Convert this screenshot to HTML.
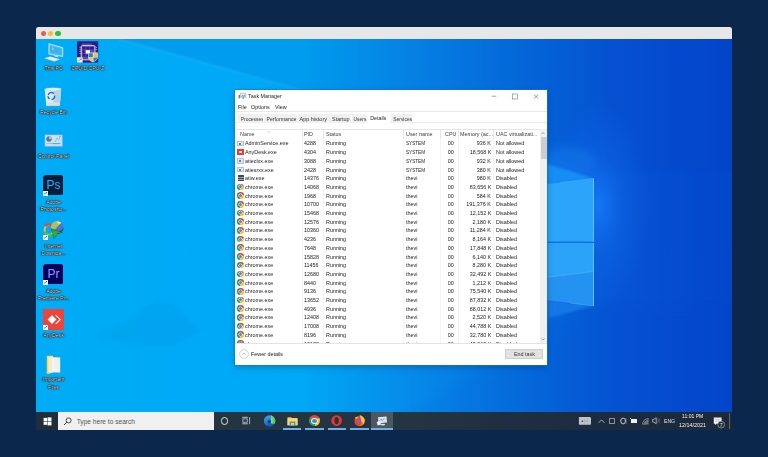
<!DOCTYPE html>
<html><head><meta charset="utf-8">
<style>
*{margin:0;padding:0;box-sizing:border-box}
html,body{width:768px;height:457px;overflow:hidden;background:#0b274c;font-family:"Liberation Sans",sans-serif;position:relative}
.a{position:absolute}
#win{position:absolute;left:36px;top:27px;width:696px;height:402.5px;border-radius:2.5px 2.5px 1.5px 1.5px;overflow:hidden}
#tbar{position:absolute;left:0;top:0;width:696px;height:11.6px;background:#e7e7e7}
.dot{position:absolute;top:3.6px;width:5.4px;height:5.4px;border-radius:50%}
#desk{position:absolute;left:0;top:11.5px;width:696px;height:373.5px;overflow:hidden;
 background:linear-gradient(90deg,#00aaf5 0%,#00a8f4 25%,#0890ec 42%,#0a6fe2 62%,#0655d6 82%,#0444c8 100%)}
#taskbar{position:absolute;left:0;top:385px;width:696px;height:17.5px;background:linear-gradient(90deg,#233540 0%,#223541 55%,#1f2e40 68%,#1c2b3d 82%,#1b293b 100%)}
.lbl{position:absolute;color:#ececec;font-size:5.1px;line-height:7.2px;text-align:center;text-shadow:0 0 0.5px #000,0 0 0.8px #000,0 0 1.1px #000,0 0.4px 1.2px #000,0 0 1.6px rgba(0,0,0,.6);white-space:nowrap}
/* task manager */
#tm{position:absolute;left:235px;top:89.5px;width:312px;height:275.5px;background:#fff;box-shadow:0 0 0 0.6px #1a7ad0,0 2px 6px rgba(0,0,0,.25);font-size:6.1px;color:#1a1a1a;overflow:hidden}
#tm .t{position:absolute;white-space:nowrap;line-height:6px;transform:scaleX(.885);transform-origin:0 50%}
.tabs{position:absolute;left:0;top:21.8px;width:312px;height:11.4px;border-top:0.5px solid #e8e8e8;border-bottom:0.5px solid #ececec;background:#fff}
.tab{position:absolute;top:1.4px;height:8.9px;background:#f0f0f0;color:#333;overflow:hidden;font-size:6.1px;line-height:10.6px;text-align:center;white-space:nowrap}
.tab.sel{background:#fff;line-height:8.4px;color:#222}
.hdr{position:absolute;left:0;top:39.8px;width:305px;height:9.45px;border-top:0.5px solid #e5e5e5}
.hdr span{position:absolute;top:0.1px;color:#3c3c3c;white-space:nowrap;transform:scaleX(.885);transform-origin:0 50%}
.sep{position:absolute;top:0;width:0.5px;height:214px;background:#efefef}
.r{position:absolute;left:0;width:305px;height:8.7px;line-height:8.7px;white-space:nowrap;color:#1c1c1c}
.r span{position:absolute;top:0;transform:scaleX(.885);transform-origin:0 50%}
.r span.c4,.r span.c5{transform-origin:100% 50%}
.c0{left:10.2px}.c1{left:68.6px}.c2{left:90.8px}.c3{left:170.7px}
.r span.up{transform:scaleX(0.76)}
.c4{right:86.6px}.c5{right:49px}.c6{left:261px}
.ic{position:absolute;left:2.4px;top:0.7px;width:6.6px;height:6.6px;display:block}
.ic.chr{border-radius:50%;background:conic-gradient(from -45deg,#db4437 0 125deg,#f4c20d 125deg 240deg,#0f9d58 240deg 360deg)}
.ic.chr::after{content:"";position:absolute;left:1.8px;top:1.8px;width:3px;height:3px;border-radius:50%;background:#4285f4;box-shadow:0 0 0 0.6px #fff}
.ic.svc{background:#dfe6ee;border:0.4px solid #b5c2d0;width:7.2px;height:5.6px;top:1.2px;left:2.1px}
.ic.svc::after{content:"";position:absolute;left:1.1px;top:1.2px;width:1.8px;height:1.8px;border-radius:50%;background:#1a6fe0}
.ic.any{background:#ee3b33;left:2.2px;top:0.6px;width:7px;height:6.6px}
.ic.any::after{content:"";position:absolute;left:1.4px;top:2px;width:3.2px;height:2.4px;background:#fff;clip-path:polygon(0 50%,40% 0,100% 0,100% 100%,40% 100%)}
.ic.calc{background:#3e4854;border-radius:0.6px;width:6.2px;height:6.6px;left:2.5px;background-image:linear-gradient(#3e4854 0 1.6px,transparent 1.6px),repeating-linear-gradient(90deg,transparent 0 1.8px,#9aa4ae 1.8px 2.2px),repeating-linear-gradient(0deg,transparent 0 1.5px,#9aa4ae 1.5px 1.9px)}
</style></head><body>
<div id="win">
 <div id="tbar">
  <div class="dot" style="left:4.9px;background:#ee5b52"></div>
  <div class="dot" style="left:12px;background:#f5bd3a"></div>
  <div class="dot" style="left:19.3px;background:#27c23f"></div>
 </div>
 <div id="desk"><svg class="a" style="left:0;top:0" width="696" height="373.5" viewBox="36 38.5 696 373.5">
 <defs>
  <linearGradient id="wb" x1="36" y1="0" x2="732" y2="0" gradientUnits="userSpaceOnUse"><stop offset="0" stop-color="#00acf6"/><stop offset="0.38" stop-color="#00a8f5"/><stop offset="0.45" stop-color="#039bf0"/><stop offset="0.55" stop-color="#0688e8"/><stop offset="0.7" stop-color="#056cdd"/><stop offset="0.82" stop-color="#0656d4"/><stop offset="0.92" stop-color="#054cd0"/><stop offset="1" stop-color="#0446ca"/></linearGradient>
  <radialGradient id="glow" cx="598" cy="205" r="70" gradientTransform="translate(598 205) scale(0.75 1.5) translate(-598 -205)" gradientUnits="userSpaceOnUse">
   <stop offset="0" stop-color="#1a80ff" stop-opacity="0.75"/><stop offset="0.5" stop-color="#1470f0" stop-opacity="0.3"/><stop offset="1" stop-color="#1470f0" stop-opacity="0"/>
  </radialGradient>
  <filter id="bl" x="-20%" y="-20%" width="140%" height="140%"><feGaussianBlur stdDeviation="4"/></filter>
  <filter id="bl1" x="-5%" y="-5%" width="110%" height="110%"><feGaussianBlur stdDeviation="0.8"/></filter>
 </defs>
 <rect x="36" y="38.5" width="696" height="373.5" fill="url(#wb)"/>
 <path d="M118 38.5 L593.5 171 L800 171 L800 0 L118 0Z" fill="#0038b8" opacity="0.10" filter="url(#bl1)"/>
 <linearGradient id="lf" x1="118" y1="0" x2="593" y2="0" gradientUnits="userSpaceOnUse"><stop offset="0" stop-color="#a8e4ff" stop-opacity="0.3"/><stop offset="0.6" stop-color="#a8e4ff" stop-opacity="0.15"/><stop offset="1" stop-color="#a8e4ff" stop-opacity="0"/></linearGradient>
 <line x1="118" y1="38.5" x2="593.5" y2="171" stroke="url(#lf)" stroke-width="0.9" filter="url(#bl1)"/>
 <path d="M593.5 305.4 L380 430 L800 430 L800 305.4Z" fill="#0038b8" opacity="0.05" filter="url(#bl)"/>
 <rect x="36" y="38.5" width="696" height="373.5" fill="url(#glow)"/>
 <path d="M92 335 L122 324 L145 306 L159 299.5 L175 304 L188 321 L200 330 L175 345 L130 345Z" fill="#0050a0" opacity="0.055" filter="url(#bl1)"/>
 <ellipse cx="565" cy="162" rx="30" ry="16" fill="#1a86f5" opacity="0.35" filter="url(#bl)"/>
 <path d="M547 163.5 L593.5 177.7 L547 184Z" fill="#1890f6" opacity="0.95" filter="url(#bl1)"/>
 <path d="M547 299 L593.5 305.4 L547 318Z" fill="#1a80ee" opacity="0.7" filter="url(#bl1)"/>
 <!-- panes -->
 <path d="M540 184.2 L593.5 177.7 L593.5 241.2 L540 241.2Z" fill="#2aa5fa"/>
 <path d="M540 242.6 L593.5 242.6 L593.5 271 L540 277.6Z" fill="#2aa3f8"/>
 <path d="M540 277.6 L593.5 271 L593.5 305.4 L540 298.8Z" fill="#2492f0"/>
 <line x1="540" y1="277.6" x2="593.5" y2="271" stroke="#56c4ff" stroke-width="0.7" opacity="0.8"/>
 <line x1="593.5" y1="177.7" x2="593.5" y2="241.2" stroke="#70d6ff" stroke-width="0.8"/>
 <line x1="593.5" y1="242.6" x2="593.5" y2="305.4" stroke="#70d6ff" stroke-width="0.8"/>
 <line x1="570" y1="302.6" x2="593.5" y2="305.4" stroke="#5ccaff" stroke-width="0.6" opacity="0.7"/>
 <line x1="560" y1="181.8" x2="593.5" y2="177.7" stroke="#5ccaff" stroke-width="0.5" opacity="0.5"/>
 <line x1="540" y1="241.9" x2="593.5" y2="241.9" stroke="#1470e0" stroke-width="1.2"/>
</svg></div>
 <div id="taskbar"></div>
</div>


<!-- desktop icons -->
<svg class="a" style="left:43px;top:42.5px" width="21" height="20" viewBox="0 0 21 20">
 <path d="M5.8 0.6 L19.8 4.6 L19.8 13.6 L5.8 11.2Z" fill="#7fd0f6" stroke="#d8f2ff" stroke-width="0.6"/>
 <path d="M6.8 2 L18.8 5.4 L18.8 12.4 L6.8 10.3Z" fill="#3fb2ee"/>
 <path d="M9 4.6 L10.6 5.8 L9 7" stroke="#e6f7ff" stroke-width="0.5" fill="none"/>
 <path d="M11 12.2 L14.5 12.8 L15.5 14.2 L12 13.8Z" fill="#d8dde2"/>
 <path d="M1.2 15.2 L7 13.6 L17 16.2 L11.4 18.6Z" fill="#ece6dc"/>
</svg>
<div class="lbl" style="left:53.5px;top:64.5px;transform:translateX(-50%)">This PC</div>
<svg class="a" style="left:76px;top:40px" width="24" height="24" viewBox="76 40 24 24">
 <rect x="77" y="41.3" width="21.2" height="21.3" fill="#2c1a88"/>
 <g fill="#d8d4ec"><rect x="82.6" y="43.6" width="0.8" height="1"/><rect x="84.6" y="43.6" width="0.8" height="1"/><rect x="86.6" y="43.6" width="0.8" height="1"/><rect x="88.6" y="43.6" width="0.8" height="1"/><rect x="90.6" y="43.6" width="0.8" height="1"/><rect x="79.6" y="47" width="1" height="0.8"/><rect x="79.6" y="49" width="1" height="0.8"/><rect x="79.6" y="51" width="1" height="0.8"/><rect x="79.6" y="53" width="1" height="0.8"/><rect x="95.8" y="47" width="1" height="0.8"/><rect x="95.8" y="49" width="1" height="0.8"/></g>
 <rect x="81.2" y="45.6" width="13.8" height="14.2" rx="1" fill="#5a4aa8" stroke="#e4e0f2" stroke-width="0.9"/>
 <g fill="#2c1a88"><rect x="82.6" y="47" width="2.8" height="2.4"/><rect x="86.4" y="47" width="2.8" height="2.4"/><rect x="90.2" y="47" width="3.4" height="2.4"/><rect x="82.6" y="50.4" width="2.2" height="2.6"/><rect x="82.6" y="54" width="2.8" height="2.6"/><rect x="86.4" y="54.4" width="2.8" height="2.4"/></g>
 <rect x="85.7" y="50.2" width="4.3" height="3.4" fill="#fafaff"/>
 <path d="M88.1 52.8 L97.8 52.6 L97.8 57 Q97.8 60.6 93 62.2 Q88.1 60.6 88.1 57Z" fill="#f0f0f8"/>
 <path d="M88.6 53.2 H92.8 V57.2 H88.6Z M93.4 57.6 H97.3 Q97 60.4 93.4 61.6Z" fill="#2f7ad8"/>
 <path d="M93.4 53.2 H97.3 V57 H93.4Z M88.6 57.6 H92.8 V61.6 Q89 60.4 88.6 57.6Z" fill="#f4c430"/>
 <rect x="77" y="57.3" width="5.6" height="5.3" fill="#f4f4f4"/>
 <path d="M78.2 61.8 Q78.4 59.4 80.8 59 L80.4 58.3 L81.8 58.7 L81.3 60.1 L81 59.5 Q79.3 59.8 78.2 61.8Z" fill="#2456b8"/>
</svg>
<div class="lbl" style="left:87.7px;top:64.5px;transform:translateX(-50%)">CPUID CPU-Z</div>
<svg class="a" style="left:44px;top:87px" width="18" height="19.5" viewBox="0 0 18 19.5">
 <path d="M0.6 2.2 L17.2 1.6 L15.8 18.6 L2.4 18.8Z" fill="#d8eefb"/>
 <path d="M9.6 2 L17.2 1.6 L15.8 18.6 L9.4 18.7Z" fill="#b4d2e8"/>
 <ellipse cx="8.9" cy="2.2" rx="8.2" ry="1.5" fill="#e8f6ff" stroke="#a6c8e0" stroke-width="0.4"/>
 <path d="M2.1 15.6 L16 15.4 L15.8 18.6 L2.4 18.8Z" fill="#eadbd0"/>
 <path d="M4.2 8 A3.4 3.4 0 0 1 9.8 6.4" stroke="#1f6ad0" stroke-width="1.4" fill="none"/>
 <path d="M10.6 8.6 A3.4 3.4 0 0 1 7.6 12.6" stroke="#1f6ad0" stroke-width="1.4" fill="none"/>
 <path d="M5.6 12 A3.4 3.4 0 0 1 4 9.2" stroke="#1f6ad0" stroke-width="1.4" fill="none"/>
</svg>
<div class="lbl" style="left:53.5px;top:109.3px;transform:translateX(-50%)">Recycle Bin</div>
<svg class="a" style="left:43.8px;top:134.4px" width="19.2" height="13.2" viewBox="0 0 19.2 13.2">
 <rect x="0.3" y="0.3" width="18.6" height="12.6" fill="#9fd3f4" stroke="#3a8ed8" stroke-width="0.6"/>
 <rect x="1.4" y="1.4" width="16.4" height="10.4" fill="#c4e5f9"/>
 <circle cx="5" cy="5" r="2.8" fill="#2e86d8"/>
 <path d="M5 2.2 A2.8 2.8 0 0 1 7.8 5 L5 5Z" fill="#f5b820"/>
 <rect x="2.4" y="9.3" width="6" height="0.8" fill="#f0a020"/>
 <rect x="8.4" y="9.3" width="8" height="0.8" fill="#3a8ed8"/>
 <path d="M11 8 L13 4 L15 6 L16 2.4" stroke="#5aa8e4" stroke-width="0.6" fill="none"/>
 <circle cx="16" cy="2.4" r="0.7" fill="#f09020"/>
</svg>
<div class="lbl" style="left:53.5px;top:153.3px;transform:translateX(-50%)">Control Panel</div>
<svg class="a" style="left:42.9px;top:174.9px" width="20.5" height="20.5" viewBox="0 0 20.5 20.5">
 <rect width="20.5" height="20.5" rx="3.6" fill="#001e36"/>
 <text x="10.4" y="14" font-family="Liberation Sans" font-size="12" fill="#31a8ff" text-anchor="middle">Ps</text>
</svg>
<svg class="a" style="left:42.8px;top:190.5px" width="5" height="5" viewBox="0 0 5 5"><rect x="0" y="0" width="5" height="5" fill="#f4f4f4"/><path d="M1 4.2 Q1.2 2 3.4 1.6 L3 1 L4.3 1.3 L3.8 2.6 L3.5 2.1 Q2 2.4 1 4.2Z" fill="#2456b8"/></svg>
<div class="lbl" style="left:53.5px;top:198.5px;transform:translateX(-50%)">Adobe<br>Photosho...</div>
<svg class="a" style="left:40px;top:217px" width="26" height="26" viewBox="40 217 26 26">
 <defs><clipPath id="gl"><circle cx="57.1" cy="227.5" r="6.5"/></clipPath></defs>
 <ellipse cx="49" cy="230" rx="4.4" ry="5" fill="none" stroke="#d9c040" stroke-width="2.2"/>
 <path d="M45.2 226.2 A4.4 5 0 0 1 51.5 225.6" stroke="#e0463a" stroke-width="2.2" fill="none"/>
 <path d="M44.6 231.5 A4.4 5 0 0 0 52 234.4" stroke="#50b848" stroke-width="2.2" fill="none"/>
 <circle cx="57.1" cy="227.5" r="6.5" fill="#4a78c8"/>
 <g clip-path="url(#gl)">
  <path d="M50 226 Q52 220 57 220 Q60 221 59.5 224.5 Q57 227 55 229.5 Q51 229 50 226Z" fill="#a9c060"/>
  <path d="M56.5 221.5 Q59 220.5 61.5 222.5 Q60.5 224.5 58.5 224.5Z" fill="#eed880"/>
  <path d="M55 232 Q61 232 64 227 L64 235 L55 235Z" fill="#27508f"/>
 </g>
 <path d="M51.6 229.4 L62.6 232.2 L57.6 233.4 L54 238.6Z" fill="#33b02e" stroke="#1d3a20" stroke-width="0.35"/>
</svg>
<svg class="a" style="left:42.8px;top:235.2px" width="5" height="5" viewBox="0 0 5 5"><rect x="0" y="0" width="5" height="5" fill="#f4f4f4"/><path d="M1 4.2 Q1.2 2 3.4 1.6 L3 1 L4.3 1.3 L3.8 2.6 L3.5 2.1 Q2 2.4 1 4.2Z" fill="#2456b8"/></svg>
<div class="lbl" style="left:53.5px;top:243.1px;transform:translateX(-50%)">Internet<br>Downloa...</div>
<svg class="a" style="left:42.9px;top:264px" width="20.5" height="20.3" viewBox="0 0 20.5 20.3">
 <rect width="20.5" height="20.3" rx="3.6" fill="#00005b"/>
 <text x="10.4" y="13.8" font-family="Liberation Sans" font-size="12" fill="#9999ff" text-anchor="middle">Pr</text>
</svg>
<svg class="a" style="left:42.8px;top:279.6px" width="5" height="5" viewBox="0 0 5 5"><rect x="0" y="0" width="5" height="5" fill="#f4f4f4"/><path d="M1 4.2 Q1.2 2 3.4 1.6 L3 1 L4.3 1.3 L3.8 2.6 L3.5 2.1 Q2 2.4 1 4.2Z" fill="#2456b8"/></svg>
<div class="lbl" style="left:53.5px;top:287.7px;transform:translateX(-50%)">Adobe<br>Premiere Pr...</div>
<svg class="a" style="left:42.6px;top:308.8px" width="21.3" height="21.2" viewBox="0 0 21.3 21.2">
 <rect width="21.3" height="21.2" fill="#ef443b"/>
 <path d="M4.6 10.6 L9 6.2 L13.4 10.6 L9 15Z" fill="#fff"/>
 <path d="M12 6.2 L13.6 6.2 L18 10.6 L13.6 15 L12 15 L16.4 10.6Z" fill="#fff"/>
</svg>
<svg class="a" style="left:42.8px;top:325.2px" width="5" height="5" viewBox="0 0 5 5"><rect x="0" y="0" width="5" height="5" fill="#f4f4f4"/><path d="M1 4.2 Q1.2 2 3.4 1.6 L3 1 L4.3 1.3 L3.8 2.6 L3.5 2.1 Q2 2.4 1 4.2Z" fill="#2456b8"/></svg>
<div class="lbl" style="left:53.5px;top:331.9px;transform:translateX(-50%)">AnyDesk</div>
<svg class="a" style="left:45.5px;top:354.5px" width="15" height="19.5" viewBox="0 0 15 19.5">
 <path d="M0.8 0.8 L7 0.8 L7 17.6 L1.8 19 L0.8 18.4Z" fill="#f6d46e"/>
 <path d="M2.6 2 L14.2 2.6 L14.2 17.6 L2.6 17.2Z" fill="#f4f4f4"/>
 <path d="M2.6 2 L6 2.2 L6 17.4 L2.6 17.2Z" fill="#fde8a8" opacity="0.7"/>
 <g stroke="#d8d8d8" stroke-width="0.4"><path d="M8 5H12.6M8 7H12.6M8 9H12.6M8 11H12.6M8 13H12.6"/></g>
</svg>
<div class="lbl" style="left:53.5px;top:376.3px;transform:translateX(-50%)">Important<br>Files</div>

<!-- taskbar contents (page coords) -->
<div class="a" style="left:36px;top:412px;width:22px;height:17.5px;background:#1f2e38"></div>
<svg class="a" style="left:42.5px;top:416.5px" width="9" height="9" viewBox="0 0 9 9"><g fill="#fff"><rect x="0.6" y="0.9" width="3.4" height="3.2"/><rect x="4.5" y="0.4" width="4" height="3.7"/><rect x="0.6" y="4.6" width="3.4" height="3.2"/><rect x="4.5" y="4.6" width="4" height="3.8"/></g></svg>
<div class="a" style="left:58px;top:412px;width:156px;height:17.5px;background:#f0f0f0"></div>
<svg class="a" style="left:62.5px;top:416.5px" width="9" height="9" viewBox="0 0 9 9"><circle cx="5.6" cy="3.4" r="2.5" fill="none" stroke="#222" stroke-width="0.8"/><line x1="3.8" y1="5.2" x2="1" y2="8" stroke="#222" stroke-width="0.9"/></svg>
<div class="a" style="left:76.7px;top:417.6px;font-size:6.6px;line-height:7px;color:#555;white-space:nowrap">Type here to search</div>
<div class="a" style="left:220.75px;top:417.25px;width:7.3px;height:7.3px;border-radius:50%;border:1.2px solid #e4e4e4"></div>
<svg class="a" style="left:240px;top:415px" width="12" height="11" viewBox="240 415 12 11"><g fill="none" stroke="#dde1e5"><line x1="242.3" y1="417.3" x2="247.8" y2="417.3" stroke-width="0.8"/><line x1="242.3" y1="423.8" x2="247.8" y2="423.8" stroke-width="0.8"/><rect x="242.9" y="418.9" width="4.3" height="3.3" stroke-width="0.7"/><line x1="249.6" y1="417" x2="249.6" y2="424.2" stroke-width="0.7"/></g></svg>


<!-- edge -->
<svg class="a" style="left:262px;top:413px" width="16" height="16" viewBox="262 413 16 16">
 <defs><linearGradient id="eg" x1="0" y1="0" x2="0.4" y2="1"><stop offset="0" stop-color="#3cb4f4"/><stop offset="1" stop-color="#0c56c0"/></linearGradient>
 <clipPath id="ec"><circle cx="269.6" cy="421" r="5.8"/></clipPath></defs>
 <circle cx="269.6" cy="421" r="5.8" fill="url(#eg)"/>
 <g clip-path="url(#ec)"><path d="M271 414 H276 V423.4 Q273 424.5 271 423Z" fill="#58d050"/><path d="M271 414 H272.6 V423.6 L271 423Z" fill="#8ccf9a"/></g>
 <ellipse cx="269.2" cy="421.6" rx="1.5" ry="1.7" fill="#1b3048"/>
</svg>
<!-- file explorer -->
<svg class="a" style="left:286.5px;top:415.5px" width="11" height="10" viewBox="0 0 11 10">
 <path d="M0.5 1.2 H4 L5 2 H10.5 V9.3 H0.5Z" fill="#f5c24a"/>
 <rect x="0.5" y="2.6" width="10" height="6.7" fill="#fcd66a"/>
 <path d="M2.6 9.3 V5.6 H8.4 V9.3 H7 V6.9 H4 V9.3Z" fill="#3b9be0"/>
 <rect x="4" y="7.8" width="3" height="1.5" fill="#f5c24a"/>
</svg>
<div class="a" style="left:283px;top:428.4px;width:18.4px;height:1.2px;background:#6eb0e2"></div>
<!-- chrome -->
<div class="a" style="left:309px;top:415.4px;width:10.8px;height:10.8px;border-radius:50%;background:conic-gradient(from -60deg,#e0443a 0 120deg,#f5c31c 120deg 240deg,#2aa14e 240deg 360deg)"></div>
<div class="a" style="left:312.1px;top:418.5px;width:4.6px;height:4.6px;border-radius:50%;background:#4a86e8;box-shadow:0 0 0 0.9px #f4f4f4"></div>
<div class="a" style="left:305.1px;top:428.4px;width:18.9px;height:1.2px;background:#6eb0e2"></div>
<!-- opera -->
<svg class="a" style="left:328px;top:412px" width="42" height="18" viewBox="328 412 42 18">
 <path fill-rule="evenodd" d="M336.6 415.3 A5.3 5.3 0 1 1 336.6 425.9 A5.3 5.3 0 1 1 336.6 415.3Z M336.6 416.9 A2.2 3.7 0 1 0 336.6 424.3 A2.2 3.7 0 1 0 336.6 416.9Z" fill="#e8352f"/>
 <circle cx="359.5" cy="421.2" r="5.1" fill="#ef3d2e"/>
 <path d="M359.6 414.9 Q363.6 416.2 364.8 419.6 Q365.2 422.4 363.4 424.4 Q362 422.6 361.2 421 Q361 418.4 359.6 414.9Z" fill="#f9c23c"/>
 <path d="M354.6 418 Q356.4 416.2 358.8 416.8 Q357.2 417.8 356.8 419.2Z" fill="#f8b830"/>
 <circle cx="358.9" cy="420.6" r="2.1" fill="#7a64c6"/>
 <path d="M361.2 421 Q362 422.6 363.4 424.4 Q361.8 425.6 359.8 425.6 Q361.4 423.6 361.2 421Z" fill="#f56b28"/>
</svg>
<div class="a" style="left:327.9px;top:428.4px;width:18.2px;height:1.3px;background:#6eb0e2"></div>
<div class="a" style="left:349.9px;top:428.4px;width:19.2px;height:1.3px;background:#6eb0e2"></div>
<!-- task manager active -->
<div class="a" style="left:370.9px;top:412.2px;width:22.1px;height:17.3px;background:#4c5761"></div>
<svg class="a" style="left:375.5px;top:415.5px" width="12" height="10" viewBox="0 0 12 10">
 <path d="M2 1.2 L10.5 0.6 L11 6.6 L2.4 7.2Z" fill="#e6e6e6"/>
 <path d="M3 2.2 L9.6 1.8 L10 5.8 L3.4 6.2Z" fill="#cfe3f2"/>
 <path d="M3.6 4.6 L5 3.2 L6.4 4.4 L8.2 2.6" stroke="#2a90e0" stroke-width="0.7" fill="none"/>
 <path d="M0.6 6 L4 5.2 L5.2 8.6 L1.8 9.4Z" fill="#f0f0f0"/>
 <ellipse cx="6.8" cy="8.6" rx="2.4" ry="0.9" fill="#e0e0e0"/>
</svg>
<div class="a" style="left:370.9px;top:428.4px;width:22.1px;height:1.2px;background:#6eb0e2"></div>
<!-- tray -->
<svg class="a" style="left:578px;top:416px" width="14" height="10" viewBox="578 416 14 10"><path d="M579.6 416.9 H590 L591 417.9 V424 Q591 424.7 590.3 424.7 H579.6 Q578.9 424.7 578.9 424 V417.6 Q578.9 416.9 579.6 416.9Z" fill="#bdc3cc"/><circle cx="582.4" cy="421.2" r="0.75" fill="#1c2535"/><g stroke="#8f98a4" stroke-width="0.35"><line x1="584.5" y1="419" x2="584.5" y2="423.4"/><line x1="587.4" y1="418.4" x2="587.4" y2="423.6"/><line x1="584.5" y1="421.2" x2="587.4" y2="421.2"/></g></svg>
<svg class="a" style="left:597.8px;top:418.6px" width="7" height="4.5" viewBox="0 0 7 4.5"><path d="M0.6 3.8 L3.5 0.9 L6.4 3.8" stroke="#c8ccd2" stroke-width="0.8" fill="none"/></svg>
<div class="a" style="left:609.4px;top:417.7px;width:5.4px;height:6.2px;border:0.6px solid #8c939b;border-radius:0.4px"></div>
<svg class="a" style="left:619px;top:416px" width="9" height="10" viewBox="619 416 9 10"><ellipse cx="623.1" cy="421" rx="2.4" ry="2.9" fill="none" stroke="#c6cbd0" stroke-width="1"/><circle cx="623.1" cy="421" r="1" fill="#222c38"/><path d="M625.4 419.2 L626.3 418.6 V423.4 L625.4 422.8" stroke="#8d959d" stroke-width="0.5" fill="none"/></svg>
<div class="a" style="left:630.8px;top:418.8px;width:6.6px;height:4px;background:#f2f2f2;border-radius:0.3px"></div>
<div class="a" style="left:629.6px;top:418.3px;width:1.5px;height:1px;background:#f2f2f2"></div>
<svg class="a" style="left:641.6px;top:417.6px" width="7" height="7" viewBox="0 0 7 7"><g stroke="#9aa1a8" stroke-width="0.7" fill="none"><path d="M0.5 6.5 A6 6 0 0 1 6.5 0.5"/><path d="M2 6.5 A4.5 4.5 0 0 1 6.5 2"/><path d="M3.5 6.5 A3 3 0 0 1 6.5 3.5"/></g><path d="M6.5 6.5 V0.5 L0.5 6.5Z" fill="#6f777f"/></svg>
<svg class="a" style="left:651.5px;top:417.4px" width="9" height="7.5" viewBox="0 0 9 7.5"><path d="M0.6 2.4 H2 L4.2 0.6 V6.9 L2 5.1 H0.6Z" fill="none" stroke="#d0d4d8" stroke-width="0.7"/><path d="M5.8 2 Q7 3.7 5.8 5.5" stroke="#8d949b" stroke-width="0.6" fill="none"/><path d="M7 1 Q8.8 3.7 7 6.5" stroke="#5f676f" stroke-width="0.6" fill="none"/></svg>
<div class="a" style="left:663.6px;top:417.5px;font-size:5.9px;line-height:7px;color:#e6e6e6;white-space:nowrap;transform:scaleX(0.86);transform-origin:0 0">ENG</div>
<div class="a" style="left:682px;top:412.9px;font-size:5.9px;line-height:7px;color:#f4f4f4;white-space:nowrap;transform:scaleX(0.86);transform-origin:0 0">11:01 PM</div>
<div class="a" style="left:679px;top:422.2px;font-size:5.9px;line-height:7px;color:#f4f4f4;white-space:nowrap;transform:scaleX(0.92);transform-origin:0 0">12/14/2021</div>
<svg class="a" style="left:712.5px;top:416.5px" width="12" height="12" viewBox="0 0 12 12"><path d="M0.8 0.6 H8.6 V6.8 H3.4 L2.2 8.2 V6.8 H0.8Z" fill="#f0f0f0"/><g stroke="#9aa0a6" stroke-width="0.5"><line x1="2" y1="2.4" x2="7.4" y2="2.4"/><line x1="2" y1="4.2" x2="7.4" y2="4.2"/></g><circle cx="8.2" cy="7.6" r="3.4" fill="#1c2838" stroke="#b8bdc2" stroke-width="0.6"/><text x="8.2" y="9.6" font-size="5.2" text-anchor="middle" fill="#f0f0f0" font-family="Liberation Sans">7</text></svg>
<div class="a" style="left:729.3px;top:412.5px;width:0.6px;height:16.5px;background:#59636d"></div>

<!-- TM -->
<div id="tm">
 <svg class="a" style="left:2px;top:2.5px" width="10" height="8" viewBox="0 0 10 8"><rect x="3.2" y="1.1" width="5.8" height="4.2" fill="#dfeaf2" stroke="#b8aa98" stroke-width="0.5"/><path d="M4 4.4 L5.2 2.8 L6.2 3.8 L7.4 2.4 L8.4 3.2 V4.8 H4Z" fill="#6cb4ec"/><rect x="5.5" y="5.4" width="1.4" height="1.6" fill="#9a9a9a"/><rect x="1.6" y="2.8" width="1.2" height="3.6" fill="#556070"/></svg>
 <div class="t" style="left:13.3px;top:3.3px;font-size:6.1px;color:#222">Task Manager</div>
 <svg class="a" style="left:250px;top:0" width="62" height="14" viewBox="485 89.5 62 14">
  <line x1="491.5" y1="95.7" x2="496.3" y2="95.7" stroke="#3c3c3c" stroke-width="0.45"/>
  <rect x="512.2" y="93.5" width="5" height="5" fill="none" stroke="#4a4a4a" stroke-width="0.45"/>
  <path d="M533.9 94 L538.3 98.2 M538.3 94 L533.9 98.2" stroke="#3c3c3c" stroke-width="0.5"/>
 </svg>
 <div class="t" style="left:3.2px;top:14.9px">File</div>
 <div class="t" style="left:16.4px;top:14.9px">Options</div>
 <div class="t" style="left:40.2px;top:14.9px">View</div>
 <div class="tabs">
  <div class="tab" style="left:2.7px;width:25.0px"><span style="display:inline-block;transform:scaleX(0.8)">Processes</span></div>
  <div class="tab" style="left:28.7px;width:33.3px"><span style="display:inline-block;transform:scaleX(0.86)">Performance</span></div>
  <div class="tab" style="left:62.8px;width:31.8px"><span style="display:inline-block;transform:scaleX(0.9)">App history</span></div>
  <div class="tab" style="left:95.4px;width:21.1px"><span style="display:inline-block;transform:scaleX(0.89)">Startup</span></div>
  <div class="tab" style="left:117.3px;width:15.3px"><span style="display:inline-block;transform:scaleX(0.8)">Users</span></div>
  <div class="tab sel" style="left:132.4px;width:22.6px"><span style="display:inline-block;transform:scaleX(0.87)">Details</span></div>
  <div class="tab" style="left:155.5px;width:21.2px"><span style="display:inline-block;transform:scaleX(0.81)">Services</span></div>
 </div>
 <div class="hdr">
  <span style="left:5px">Name</span>
  <svg class="a" style="left:32px;top:0.3px" width="3.5" height="2" viewBox="0 0 3.5 2"><path d="M0.3 1.7 L1.75 0.3 L3.2 1.7" stroke="#9a9a9a" stroke-width="0.4" fill="none"/></svg>
  <span style="left:68.6px">PID</span>
  <span style="left:90.8px">Status</span>
  <span style="left:170.7px">User name</span>
  <span style="left:209.6px">CPU</span>
  <span style="left:225px">Memory (ac...</span>
  <span style="left:261px">UAC virtualizati...</span>
 </div>
  <div class="sep" style="left:66.5px;top:40px;height:9.3px;background:#e6e6e6"></div>
 <div class="sep" style="left:66.5px;top:49.3px;height:204.4px;background:#f1f4f8"></div>
 <div class="sep" style="left:88.1px;top:40px;height:9.3px;background:#e6e6e6"></div>
 <div class="sep" style="left:88.1px;top:49.3px;height:204.4px;background:#f1f4f8"></div>
 <div class="sep" style="left:168.3px;top:40px;height:9.3px;background:#e6e6e6"></div>
 <div class="sep" style="left:168.3px;top:49.3px;height:204.4px;background:#f1f4f8"></div>
 <div class="sep" style="left:204.8px;top:40px;height:9.3px;background:#e6e6e6"></div>
 <div class="sep" style="left:204.8px;top:49.3px;height:204.4px;background:#f1f4f8"></div>
 <div class="sep" style="left:222.5px;top:40px;height:9.3px;background:#e6e6e6"></div>
 <div class="sep" style="left:222.5px;top:49.3px;height:204.4px;background:#f1f4f8"></div>
 <div class="sep" style="left:258.4px;top:40px;height:9.3px;background:#e6e6e6"></div>
 <div class="sep" style="left:258.4px;top:49.3px;height:204.4px;background:#f1f4f8"></div>
 <div class="a" style="left:0;top:49.25px;width:305px;height:204.45px;overflow:hidden">
 <div class="a" style="left:0;top:-49.25px;width:305px;height:260px">
<div class="r" style="top:49.90px"><i class="ic svc"></i><span class="c0">AdminService.exe</span><span class="c1">4288</span><span class="c2">Running</span><span class="c3 up">SYSTEM</span><span class="c4">00</span><span class="c5">936 K</span><span class="c6">Not allowed</span></div>
<div class="r" style="top:58.60px"><i class="ic any"></i><span class="c0">AnyDesk.exe</span><span class="c1">4304</span><span class="c2">Running</span><span class="c3 up">SYSTEM</span><span class="c4">00</span><span class="c5">18,568 K</span><span class="c6">Not allowed</span></div>
<div class="r" style="top:67.30px"><i class="ic svc"></i><span class="c0">atieclxx.exe</span><span class="c1">3088</span><span class="c2">Running</span><span class="c3 up">SYSTEM</span><span class="c4">00</span><span class="c5">932 K</span><span class="c6">Not allowed</span></div>
<div class="r" style="top:76.00px"><i class="ic svc"></i><span class="c0">atiesrxx.exe</span><span class="c1">2428</span><span class="c2">Running</span><span class="c3 up">SYSTEM</span><span class="c4">00</span><span class="c5">380 K</span><span class="c6">Not allowed</span></div>
<div class="r" style="top:84.70px"><i class="ic calc"></i><span class="c0">atiw.exe</span><span class="c1">14376</span><span class="c2">Running</span><span class="c3">thevi</span><span class="c4">00</span><span class="c5">980 K</span><span class="c6">Disabled</span></div>
<div class="r" style="top:93.40px"><i class="ic chr"></i><span class="c0">chrome.exe</span><span class="c1">14068</span><span class="c2">Running</span><span class="c3">thevi</span><span class="c4">00</span><span class="c5">83,656 K</span><span class="c6">Disabled</span></div>
<div class="r" style="top:102.10px"><i class="ic chr"></i><span class="c0">chrome.exe</span><span class="c1">1968</span><span class="c2">Running</span><span class="c3">thevi</span><span class="c4">00</span><span class="c5">584 K</span><span class="c6">Disabled</span></div>
<div class="r" style="top:110.80px"><i class="ic chr"></i><span class="c0">chrome.exe</span><span class="c1">10700</span><span class="c2">Running</span><span class="c3">thevi</span><span class="c4">00</span><span class="c5">191,376 K</span><span class="c6">Disabled</span></div>
<div class="r" style="top:119.50px"><i class="ic chr"></i><span class="c0">chrome.exe</span><span class="c1">15468</span><span class="c2">Running</span><span class="c3">thevi</span><span class="c4">00</span><span class="c5">12,152 K</span><span class="c6">Disabled</span></div>
<div class="r" style="top:128.20px"><i class="ic chr"></i><span class="c0">chrome.exe</span><span class="c1">12576</span><span class="c2">Running</span><span class="c3">thevi</span><span class="c4">00</span><span class="c5">2,180 K</span><span class="c6">Disabled</span></div>
<div class="r" style="top:136.90px"><i class="ic chr"></i><span class="c0">chrome.exe</span><span class="c1">10360</span><span class="c2">Running</span><span class="c3">thevi</span><span class="c4">00</span><span class="c5">11,284 K</span><span class="c6">Disabled</span></div>
<div class="r" style="top:145.60px"><i class="ic chr"></i><span class="c0">chrome.exe</span><span class="c1">4236</span><span class="c2">Running</span><span class="c3">thevi</span><span class="c4">00</span><span class="c5">8,164 K</span><span class="c6">Disabled</span></div>
<div class="r" style="top:154.30px"><i class="ic chr"></i><span class="c0">chrome.exe</span><span class="c1">7648</span><span class="c2">Running</span><span class="c3">thevi</span><span class="c4">00</span><span class="c5">17,848 K</span><span class="c6">Disabled</span></div>
<div class="r" style="top:163.00px"><i class="ic chr"></i><span class="c0">chrome.exe</span><span class="c1">15828</span><span class="c2">Running</span><span class="c3">thevi</span><span class="c4">00</span><span class="c5">6,140 K</span><span class="c6">Disabled</span></div>
<div class="r" style="top:171.70px"><i class="ic chr"></i><span class="c0">chrome.exe</span><span class="c1">11456</span><span class="c2">Running</span><span class="c3">thevi</span><span class="c4">00</span><span class="c5">8,280 K</span><span class="c6">Disabled</span></div>
<div class="r" style="top:180.40px"><i class="ic chr"></i><span class="c0">chrome.exe</span><span class="c1">12680</span><span class="c2">Running</span><span class="c3">thevi</span><span class="c4">00</span><span class="c5">32,492 K</span><span class="c6">Disabled</span></div>
<div class="r" style="top:189.10px"><i class="ic chr"></i><span class="c0">chrome.exe</span><span class="c1">8440</span><span class="c2">Running</span><span class="c3">thevi</span><span class="c4">00</span><span class="c5">1,212 K</span><span class="c6">Disabled</span></div>
<div class="r" style="top:197.80px"><i class="ic chr"></i><span class="c0">chrome.exe</span><span class="c1">9136</span><span class="c2">Running</span><span class="c3">thevi</span><span class="c4">00</span><span class="c5">75,540 K</span><span class="c6">Disabled</span></div>
<div class="r" style="top:206.50px"><i class="ic chr"></i><span class="c0">chrome.exe</span><span class="c1">13652</span><span class="c2">Running</span><span class="c3">thevi</span><span class="c4">00</span><span class="c5">87,832 K</span><span class="c6">Disabled</span></div>
<div class="r" style="top:215.20px"><i class="ic chr"></i><span class="c0">chrome.exe</span><span class="c1">4936</span><span class="c2">Running</span><span class="c3">thevi</span><span class="c4">00</span><span class="c5">88,012 K</span><span class="c6">Disabled</span></div>
<div class="r" style="top:223.90px"><i class="ic chr"></i><span class="c0">chrome.exe</span><span class="c1">12408</span><span class="c2">Running</span><span class="c3">thevi</span><span class="c4">00</span><span class="c5">2,520 K</span><span class="c6">Disabled</span></div>
<div class="r" style="top:232.60px"><i class="ic chr"></i><span class="c0">chrome.exe</span><span class="c1">17008</span><span class="c2">Running</span><span class="c3">thevi</span><span class="c4">00</span><span class="c5">44,788 K</span><span class="c6">Disabled</span></div>
<div class="r" style="top:241.30px"><i class="ic chr"></i><span class="c0">chrome.exe</span><span class="c1">8196</span><span class="c2">Running</span><span class="c3">thevi</span><span class="c4">00</span><span class="c5">32,780 K</span><span class="c6">Disabled</span></div>
<div class="r" style="top:250.00px"><i class="ic chr"></i><span class="c0">chrome.exe</span><span class="c1">13172</span><span class="c2">Running</span><span class="c3">thevi</span><span class="c4">00</span><span class="c5">49,263 K</span><span class="c6">Disabled</span></div>
 </div></div>
 <!-- scrollbar -->
 <div class="a" style="left:305px;top:39.8px;width:7px;height:214px;background:#f0f0f0"></div>
 <div class="a" style="left:305.5px;top:47.5px;width:6px;height:21.7px;background:#cdcdcd"></div>
 <svg class="a" style="left:306px;top:42.3px" width="4" height="2.6" viewBox="0 0 4 2.6"><path d="M0.4 2.2 L2 0.5 L3.6 2.2" stroke="#606060" stroke-width="0.5" fill="none"/></svg>
 <svg class="a" style="left:306px;top:248.5px" width="4" height="2.6" viewBox="0 0 4 2.6"><path d="M0.4 0.4 L2 2.1 L3.6 0.4" stroke="#606060" stroke-width="0.5" fill="none"/></svg>
 <div class="a" style="left:0;top:253.7px;width:312px;height:0.5px;background:#e3e3e3"></div>
 <!-- footer -->
 <svg class="a" style="left:3.5px;top:259.5px" width="10" height="10" viewBox="0 0 10 10"><circle cx="5" cy="5" r="4.4" fill="none" stroke="#a8a8a8" stroke-width="0.5"/><path d="M3.2 5.8 L5 4 L6.8 5.8" stroke="#777" stroke-width="0.5" fill="none"/></svg>
 <div class="t" style="left:15.9px;top:261.5px">Fewer details</div>
 <div class="a" style="left:270.3px;top:259.4px;width:37.5px;height:9.9px;background:#e1e1e1;border:0.5px solid #cfcfcf"></div>
 <div class="t" style="left:279px;top:261.6px;color:#333">End task</div>
</div>
</body></html>
